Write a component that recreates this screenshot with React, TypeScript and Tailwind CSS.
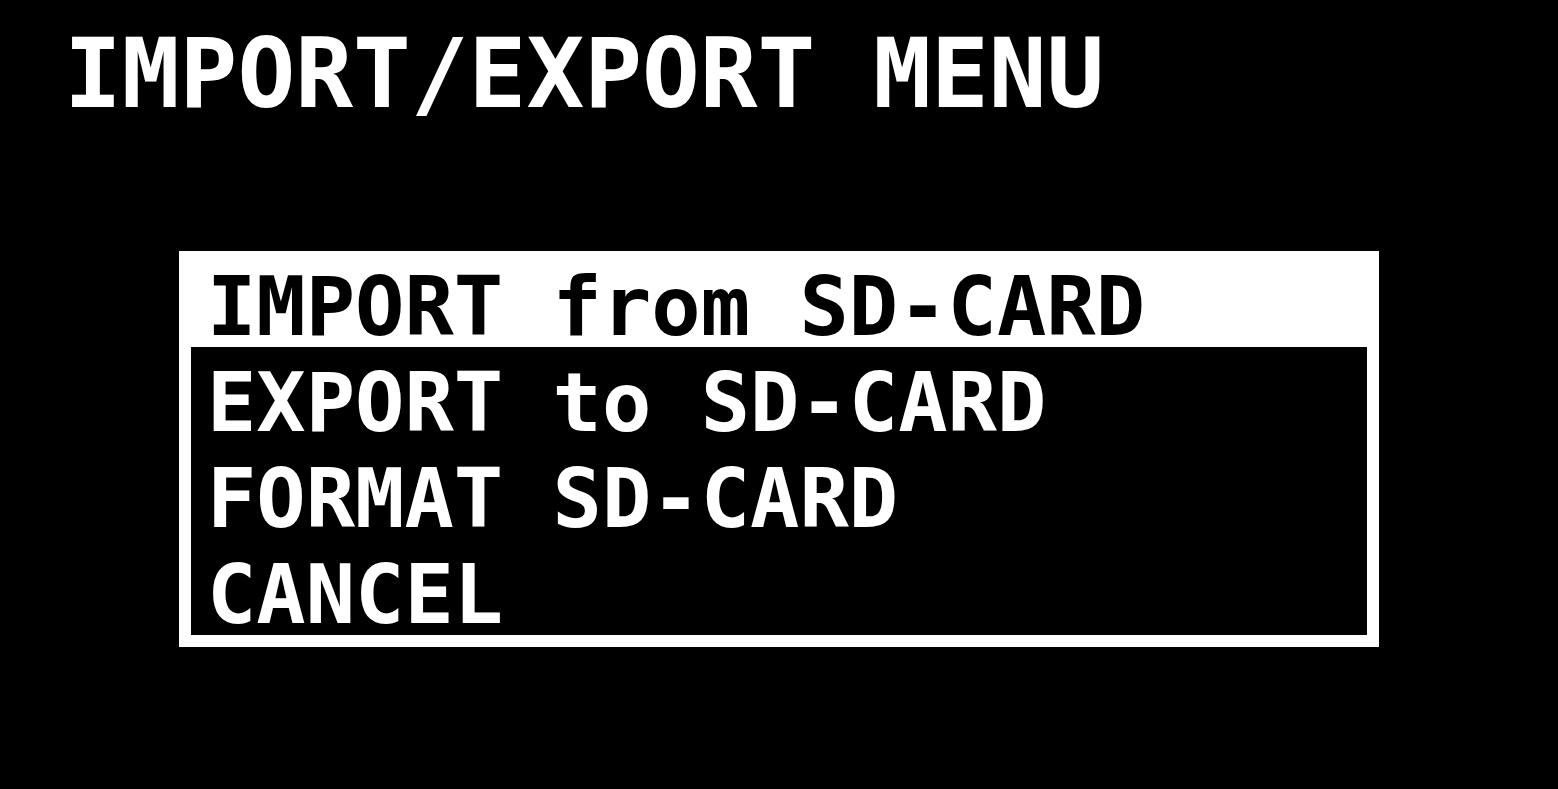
import React, { useState } from "react";

const OPTIONS = [
  "IMPORT from SD-CARD",
  "EXPORT to SD-CARD",
  "FORMAT SD-CARD",
  "CANCEL",
];

/**
 * ImportExportMenu
 * - Device style menu: one title line and a framed list
 * - The selected row is drawn inverted
 */
export default function ImportExportMenu() {
  const [selected, setSelected] = useState(0);

  return (
    <main className="min-h-screen bg-black px-16 pt-[26px] font-['DejaVu_Sans_Mono',monospace] font-bold text-white">
      <h1 className="whitespace-nowrap text-[96px] leading-24">
        IMPORT/EXPORT MENU
      </h1>
      <ul className="mx-auto mt-[129px] w-full max-w-[1200px] border-12 border-t-0 border-white">
        {OPTIONS.map((option, i) => (
          <li key={option}>
            <button
              type="button"
              onClick={() => setSelected(i)}
              className={
                i === selected
                  ? "block w-full whitespace-nowrap bg-white px-4 pt-4 text-left text-[82px] leading-20 text-black"
                  : "block w-full whitespace-nowrap bg-black px-4 pt-4 text-left text-[82px] leading-20 text-white"
              }
            >
              {option}
            </button>
          </li>
        ))}
      </ul>
    </main>
  );
}
